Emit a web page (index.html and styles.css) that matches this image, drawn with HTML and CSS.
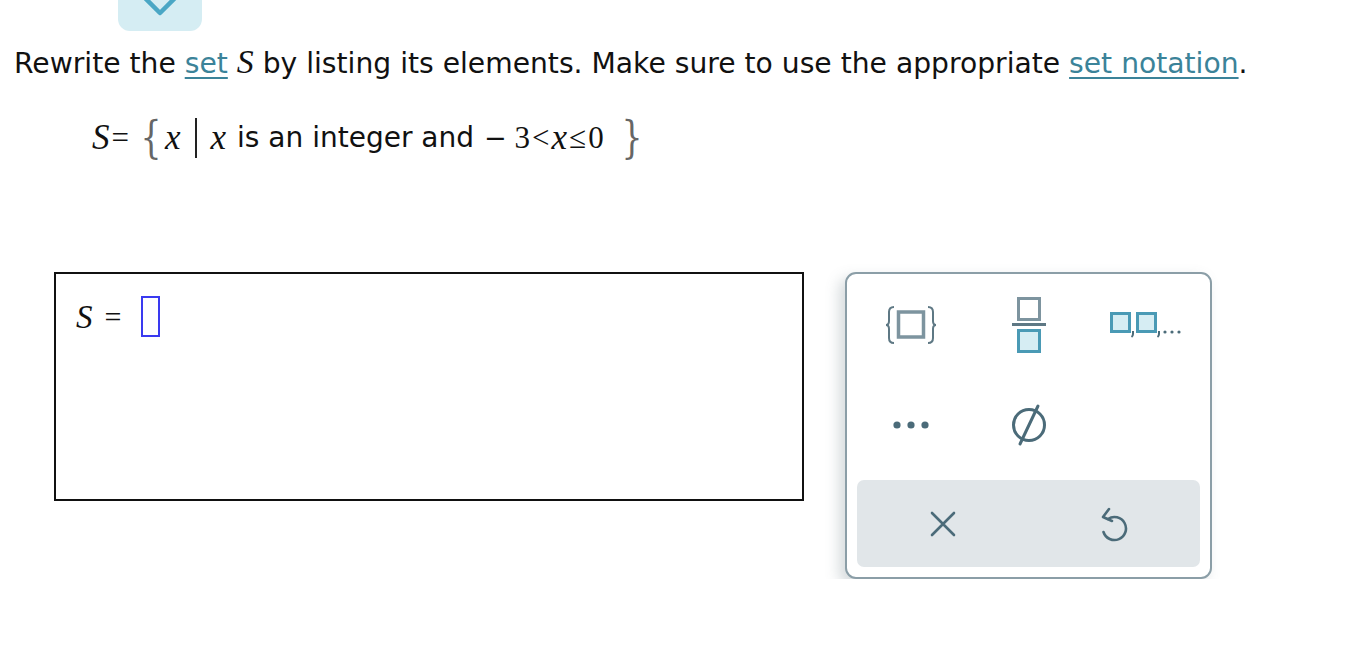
FILE: index.html
```html
<!DOCTYPE html>
<html lang="en">

<head>
    <meta charset="UTF-8">
    <meta name="viewport" content="width=device-width, initial-scale=1.0">
    <title>Set notation</title>
    <link rel="stylesheet" href="styles.css">
</head>

<body>
    <div class="toptab">
        <svg width="40" height="18" viewBox="0 0 40 18">
            <path d="M4 -3 L20 13 L36 -3" fill="none" stroke="#4aa7c5" stroke-width="4.5" stroke-linecap="round" stroke-linejoin="round" />
        </svg>
    </div>

    <p class="prompt">
        Rewrite the <a href="#">set</a> <span class="mi">S</span> by listing its elements. Make sure to use the appropriate <a href="#">set notation</a>.
    </p>

    <p class="setdef">
        <span class="mi">S</span><span class="mo">=</span><span class="brace">{</span><span class="mi">x</span><span class="bar"></span><span class="mi">x</span><span class="txt">is an integer and</span><span class="mo minus">&minus;</span><span class="mn">3</span><span class="mo">&lt;</span><span class="mi">x</span><span class="mo">&le;</span><span class="mn">0</span><span class="brace">}</span>
    </p>

    <div class="work">
        <div class="answer">
            <span class="mi">S</span>
            <span class="eq">=</span>
            <span class="slot"></span>
        </div>

        <div class="palette">
            <div class="keys">
                <button class="key" title="set braces">
                    <svg width="52" height="42" viewBox="0 0 52 42">
                        <path d="M9 3 Q4 3 4 8 L4 17 Q4 21 1 21 Q4 21 4 25 L4 34 Q4 39 9 39" fill="none" stroke="#5e7884" stroke-width="2" />
                        <path d="M43 3 Q48 3 48 8 L48 17 Q48 21 51 21 Q48 21 48 25 L48 34 Q48 39 43 39" fill="none" stroke="#5e7884" stroke-width="2" />
                        <rect x="13.5" y="8" width="25" height="25" fill="none" stroke="#7d949f" stroke-width="3.5" />
                    </svg>
                </button>
                <button class="key" title="fraction">
                    <svg width="36" height="56" viewBox="0 0 36 56">
                        <rect x="7.5" y="1.5" width="21" height="21" fill="none" stroke="#7d949f" stroke-width="3" />
                        <rect x="1" y="26" width="34" height="3" fill="#5e7884" />
                        <rect x="7.5" y="33.5" width="21" height="21" fill="#d6edf3" stroke="#4a9ab5" stroke-width="3" />
                    </svg>
                </button>
                <button class="key" title="list">
                    <svg width="74" height="26" viewBox="0 0 74 26">
                        <rect x="1.5" y="1.5" width="18" height="18" fill="#d6edf3" stroke="#4a9ab5" stroke-width="3" />
                        <path d="M23 19 L23 22 Q23 24 21.5 25" fill="none" stroke="#4b6b79" stroke-width="2" />
                        <rect x="27.5" y="1.5" width="18" height="18" fill="#d6edf3" stroke="#4a9ab5" stroke-width="3" />
                        <path d="M49 19 L49 22 Q49 24 47.5 25" fill="none" stroke="#4b6b79" stroke-width="2" />
                        <circle cx="55" cy="20" r="1.6" fill="#4b6b79" />
                        <circle cx="62" cy="20" r="1.6" fill="#4b6b79" />
                        <circle cx="69" cy="20" r="1.6" fill="#4b6b79" />
                    </svg>
                </button>
                <button class="key" title="more">
                    <svg width="38" height="10" viewBox="0 0 38 10">
                        <circle cx="5" cy="5" r="3.6" fill="#4b6b79" />
                        <circle cx="19" cy="5" r="3.6" fill="#4b6b79" />
                        <circle cx="33" cy="5" r="3.6" fill="#4b6b79" />
                    </svg>
                </button>
                <button class="key" title="empty set">
                    <svg width="40" height="42" viewBox="0 0 40 42">
                        <circle cx="20" cy="21" r="15.5" fill="none" stroke="#4b6b79" stroke-width="3" />
                        <path d="M29 2 L11 40" stroke="#4b6b79" stroke-width="3" stroke-linecap="round" />
                    </svg>
                </button>
                <span class="key"></span>
            </div>
            <div class="actions">
                <button class="key" title="clear">
                    <svg width="26" height="26" viewBox="0 0 26 26">
                        <path d="M2 2 L24 24 M24 2 L2 24" stroke="#4b6b79" stroke-width="2.6" stroke-linecap="round" />
                    </svg>
                </button>
                <button class="key" title="undo">
                    <svg width="30" height="36" viewBox="0 0 30 36">
                        <path d="M4.5 26 A11.5 11.5 0 1 0 9 13" fill="none" stroke="#4b6b79" stroke-width="2.6" stroke-linecap="round" />
                        <path d="M10 3 L4 11 L13 15" fill="none" stroke="#4b6b79" stroke-width="2.6" stroke-linecap="round" stroke-linejoin="round" />
                    </svg>
                </button>
            </div>
        </div>
    </div>
</body>

</html>
```

FILE: styles.css
```css
* {
    margin: 0;
    padding: 0;
    box-sizing: border-box;
}

body {
    background: #fff;
    color: #111;
    font-family: "DejaVu Sans", Verdana, sans-serif;
}

.toptab {
    width: 84px;
    height: 31px;
    margin-left: 118px;
    background: #d5edf3;
    border-radius: 0 0 12px 12px;
    display: flex;
    justify-content: center;
}

.prompt {
    margin: 13px 0 0 14px;
    font-size: 28.2px;
    line-height: 36px;
    white-space: nowrap;
}

.prompt a {
    color: #3b8399;
    text-decoration: underline;
    text-underline-offset: 4px;
}

.mi {
    font-family: "Liberation Serif", "Times New Roman", serif;
    font-style: italic;
    font-size: 1.2em;
}

.setdef {
    margin: 34px 0 0 92px;
    font-size: 28px;
    line-height: 44px;
    display: flex;
    align-items: center;
    white-space: nowrap;
}

.setdef .mi {
    font-size: 35px;
}

.setdef .mo,
.setdef .mn {
    font-family: "Liberation Serif", "Times New Roman", serif;
    font-size: 31px;
}

/* the serif minus is short, take the sans one */
.setdef .minus {
    font-family: "DejaVu Sans", sans-serif;
    font-size: 27px;
    margin: 0 8px 0 10px;
}

.setdef .mn + .mo,
.setdef .mi + .mo {
    margin: 0 2px;
}

.setdef .brace {
    font-family: "DejaVu Serif", serif;
    font-size: 44px;
    line-height: 44px;
    color: #666;
    transform: scaleX(0.75);
    margin: 0 0 0 6px;
}

.setdef .brace:last-child {
    margin: 0 0 0 14px;
}

.setdef .bar {
    width: 2px;
    height: 40px;
    background: #222;
    margin: 0 14px 0 14px;
}

.setdef .txt {
    margin-left: 11px;
}

.work {
    margin: 112px 0 0 54px;
    display: flex;
    align-items: flex-start;
}

.answer {
    width: 750px;
    height: 229px;
    border: 2px solid #111;
    padding: 21px 0 0 20px;
    display: flex;
    align-items: flex-start;
    gap: 12px;
}

.answer .mi {
    font-size: 33px;
    line-height: 44px;
}

.answer .eq {
    font-family: "Liberation Serif", "Times New Roman", serif;
    font-size: 30px;
    line-height: 44px;
}

.answer .slot {
    width: 19px;
    height: 41px;
    border: 2px solid #3a3af0;
    margin: 1px 0 0 8px;
}

.palette {
    width: 367px;
    height: 307px;
    margin-left: 41px;
    border: 2px solid #8b9ea7;
    border-radius: 11px;
    box-shadow: -6px 6px 14px rgba(90, 110, 120, 0.25);
    padding: 1px 2px 9px 2px;
    background: #fff;
}

.keys {
    display: grid;
    grid-template-columns: repeat(3, 118px);
    grid-template-rows: 100px 100px;
    justify-content: center;
}

.key {
    border: none;
    background: none;
    display: flex;
    align-items: center;
    justify-content: center;
}

.actions {
    margin: 5px 8px 0 8px;
    height: 87px;
    background: #e1e6e9;
    border-radius: 7px;
    display: grid;
    grid-template-columns: 1fr 1fr;
}
```
